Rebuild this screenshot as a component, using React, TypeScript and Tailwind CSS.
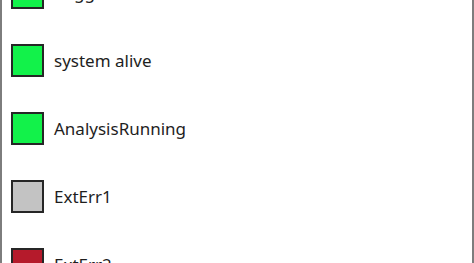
const items = [
  { label: "Trigger", color: "bg-[#12f24a]" },
  { label: "system alive", color: "bg-[#12f24a]" },
  { label: "AnalysisRunning", color: "bg-[#12f24a]" },
  { label: "ExtErr1", color: "bg-[#c3c3c3]" },
  { label: "ExtErr2", color: "bg-[#b51a2b]" },
];

export default function App() {
  return (
    <div className="h-[263px] w-[474px] overflow-hidden bg-white border-x-2 border-[#7d7d7d]">
      <div className="-mt-[24px] flex flex-col gap-[35px] pl-[9px]">
        {items.map((item) => (
          <div key={item.label} className="flex h-[33px] items-center gap-[10px]">
            <div className={`h-[33px] w-[33px] shrink-0 border-2 border-[#262626] ${item.color}`} />
            <span className="text-[17px] text-[#1e1e1e] font-['Noto_Sans',sans-serif]">{item.label}</span>
          </div>
        ))}
      </div>
    </div>
  );
}
